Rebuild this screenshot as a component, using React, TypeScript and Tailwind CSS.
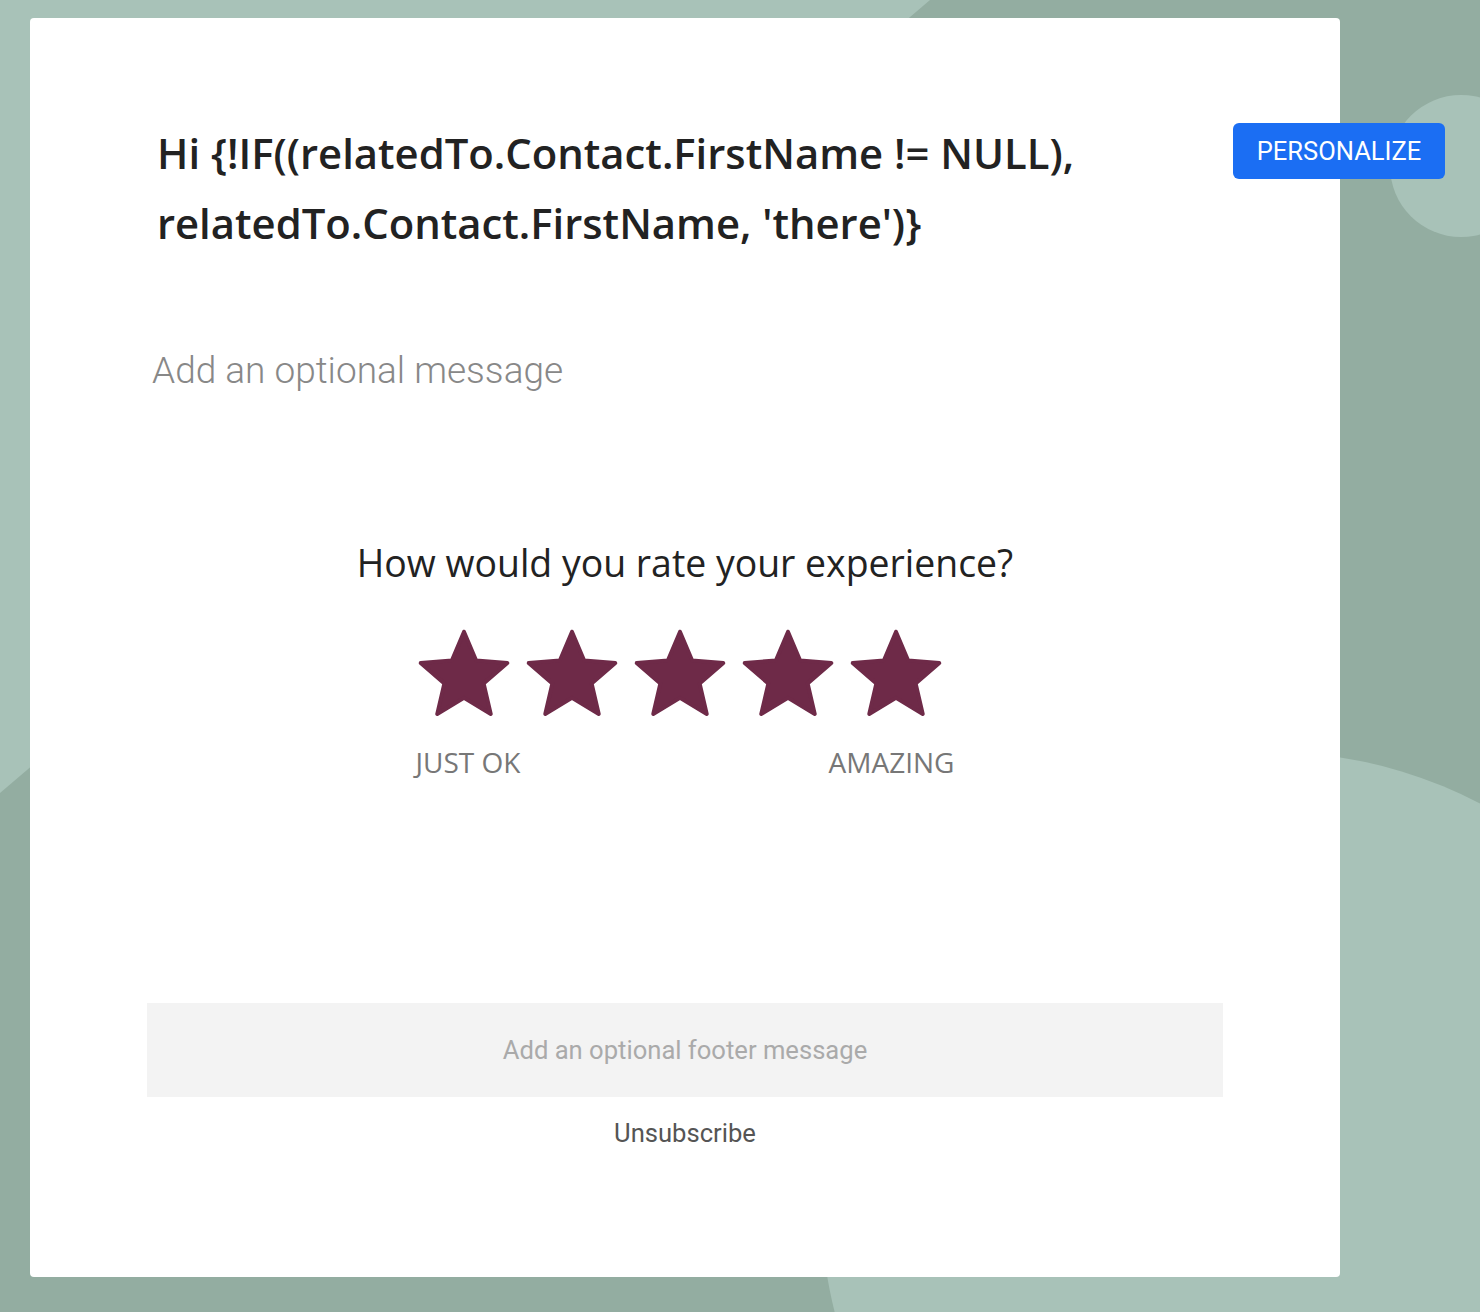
import React from 'react';

const STAR_PATH =
  'M12 17.27L18.18 21l-1.64-7.03L22 9.24l-7.19-.61L12 2 9.19 8.63 2 9.24l5.46 4.73L5.82 21z';

const Star = () => (
  <svg viewBox="0 0 24 24" className="w-[104px] h-[104px] shrink-0">
    <path d={STAR_PATH} fill="#6e2a48" stroke="#6e2a48" strokeWidth={0.9} strokeLinejoin="round" />
  </svg>
);

export default function App() {
  const ratings = [1, 2, 3, 4, 5];

  return (
    <div className="relative w-[1480px] h-[1312px] overflow-hidden bg-[#93ada1]">
      {/* background shapes */}
      <div className="absolute inset-0 bg-[#a8c2b8] [clip-path:polygon(0_0,930px_0,0_793px)]" />
      <div className="absolute left-[1390px] top-[95px] w-[142px] h-[142px] rounded-full bg-[#a8c2b8]" />
      <div className="absolute left-[821px] top-[752px] w-[900px] h-[900px] rounded-full bg-[#a8c2b8]" />

      <div className="relative pt-[18px] pl-[30px]">
        <div className="w-[1310px] h-[1259px] bg-white rounded-[4px] px-[117px] pt-[100px] flex flex-col">
          <h1 className="pl-[10px] text-[41.8px] leading-[70px] font-semibold text-[#222] font-['Open_Sans',sans-serif]">
            Hi {'{'}!IF((relatedTo.Contact.FirstName != NULL),
            <br />
            relatedTo.Contact.FirstName, 'there'){'}'}
          </h1>

          <p className="mt-[89px] pl-[5px] text-[37px] leading-[48px] font-light text-[#888] font-['Roboto',sans-serif]">
            Add an optional message
          </p>

          <p className="mt-[144px] text-center text-[37.4px] leading-[48px] text-[#222] font-['Open_Sans',sans-serif]">
            How would you rate your experience?
          </p>

          <div className="mt-[36px] flex justify-center pr-[10px]">
            <div className="flex gap-[4px]">
              {ratings.map((r) => (
                <Star key={r} />
              ))}
            </div>
          </div>

          <div className="mt-[17px] flex justify-center pr-[10px]">
            <div className="flex gap-[4px] text-[28px] leading-[36px] text-[#777] font-['Open_Sans',sans-serif]">
              <div className="w-[104px] flex justify-center whitespace-nowrap pl-[8px]">JUST OK</div>
              <div className="w-[104px]" />
              <div className="w-[104px]" />
              <div className="w-[104px]" />
              <div className="w-[104px] flex justify-center whitespace-nowrap pr-[9px]">AMAZING</div>
            </div>
          </div>

          <div className="mt-[223px] h-[94px] bg-[#f3f3f3] flex items-center justify-center text-[25.6px] text-[#aaa] font-['Roboto',sans-serif]">
            Add an optional footer message
          </div>

          <p className="mt-[20px] text-center text-[25.6px] leading-[32px] text-[#555] font-['Roboto',sans-serif]">
            Unsubscribe
          </p>
        </div>
      </div>

      <button className="absolute left-[1233px] top-[123px] w-[212px] h-[56px] rounded-[6px] bg-[#1b6ef3] text-white text-[25.5px] font-['Roboto',sans-serif]">
        PERSONALIZE
      </button>
    </div>
  );
}
